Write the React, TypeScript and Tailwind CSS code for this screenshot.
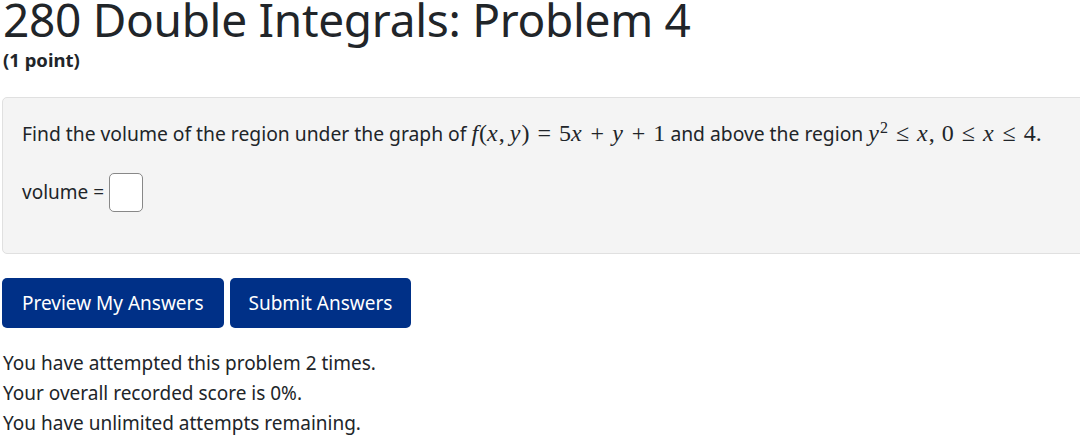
import React from 'react';

const M = ({ children }: { children: React.ReactNode }) => (
  <span className="font-['Liberation_Serif',serif] text-[24px]">{children}</span>
);

const I = ({ children }: { children: React.ReactNode }) => <i className="pr-[1px]">{children}</i>;

// relation / binary operators with TeX-like spacing
const Rel = ({ children }: { children: React.ReactNode }) => (
  <span className="mx-[8px]">{children}</span>
);
const Bin = ({ children }: { children: React.ReactNode }) => (
  <span className="mx-[8px]">{children}</span>
);

export default function App() {
  return (
    <div className="w-[1080px] h-[446px] overflow-hidden bg-white text-[#212529] font-['Noto_Sans',sans-serif]">
      <div className="pl-[3px]">
        <h2 className="text-[46px] leading-[46px] -mt-[4px] font-normal tracking-[-0.3px]">
          280 Double Integrals: Problem 4
        </h2>
        <div className="text-[18.5px] font-bold leading-[24px] mt-[6px]">(1 point)</div>
      </div>

      <div className="ml-[2px] mt-[25px] w-[1110px] h-[157px] bg-[#f4f4f4] border border-[#e0e0e0] rounded-[5px] px-[19px] pt-[21px]">
        <p className="text-[19.3px] leading-[28px] whitespace-nowrap">
          Find the volume of the region under the graph of{' '}
          <M>
            <I>f</I>(<I>x</I>,<span className="ml-[5px]" /><I>y</I>)<Rel>=</Rel>5<I>x</I>
            <Bin>+</Bin>
            <I>y</I>
            <Bin>+</Bin>1
          </M>{' '}
          and above the region{' '}
          <M>
            <I>y</I>
            <sup className="text-[16px]">2</sup>
            <Rel>≤</Rel>
            <I>x</I>,<span className="ml-[7px]" />0<Rel>≤</Rel>
            <I>x</I>
            <Rel>≤</Rel>4.
          </M>
        </p>
        <div className="flex items-center mt-[25px] text-[19px]">
          <span>volume =</span>
          <span className="ml-[5px] w-[34px] h-[39px] bg-white border border-[#888] rounded-[5px]" />
        </div>
      </div>

      <div className="flex gap-[6px] ml-[2px] mt-[24px]">
        <button className="h-[50px] px-[20px] bg-[#003087] text-white text-[19px] rounded-[5px]">
          Preview My Answers
        </button>
        <button className="h-[50px] px-[19px] bg-[#003087] text-white text-[19px] rounded-[5px]">
          Submit Answers
        </button>
      </div>

      <div className="pl-[3px] mt-[20px] text-[19px] leading-[30px]">
        <div>You have attempted this problem 2 times.</div>
        <div>Your overall recorded score is 0%.</div>
        <div>You have unlimited attempts remaining.</div>
      </div>
    </div>
  );
}
